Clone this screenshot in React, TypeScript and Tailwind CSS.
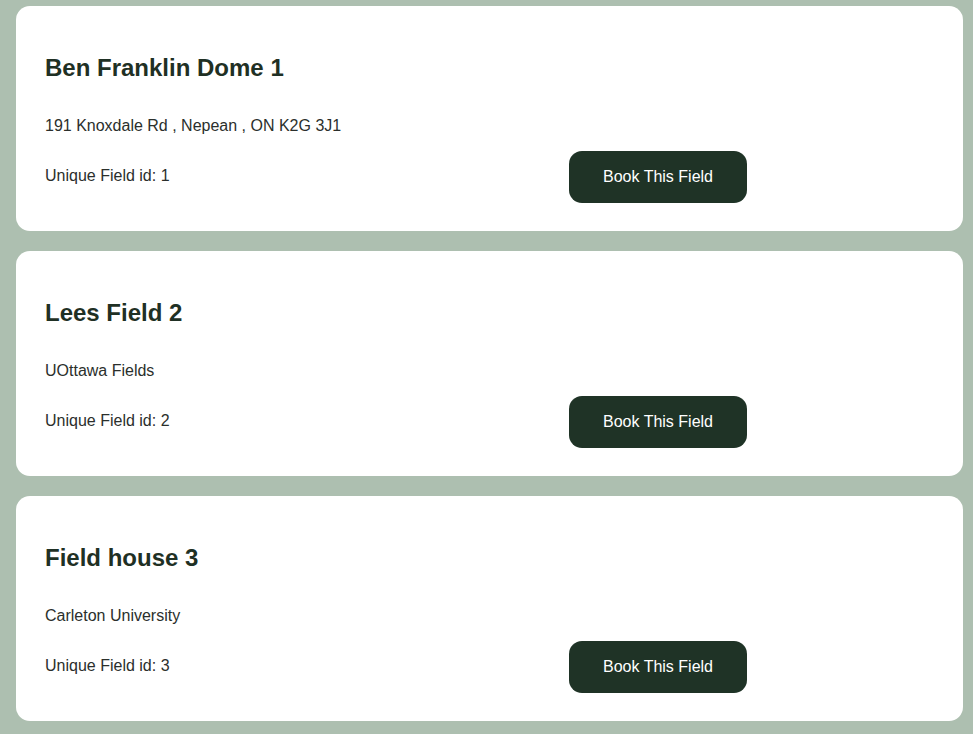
type Field = {
  id: number
  name: string
  location: string
}

const FIELDS: Field[] = [
  { id: 1, name: 'Ben Franklin Dome', location: '191 Knoxdale Rd , Nepean , ON K2G 3J1' },
  { id: 2, name: 'Lees Field', location: 'UOttawa Fields' },
  { id: 3, name: 'Field house', location: 'Carleton University' },
]

function FieldCard({ field }: { field: Field }) {
  return (
    <div className="bg-white rounded-[14px] h-[225px] px-[29px] pt-[48px]">
      <h2 className="text-[24px] leading-[28px] font-bold text-[#1f3024]">
        {field.name} {field.id}
      </h2>
      <p className="mt-[35px] text-[16px] leading-[18px] text-[#2b2f2c]">{field.location}</p>
      <div className="mt-[16px] grid grid-cols-[524px_178px] items-center">
        <span className="text-[16px] leading-[18px] text-[#2b2f2c] -mt-[2px]">
          Unique Field id: {field.id}
        </span>
        <button className="h-[52px] rounded-[13px] bg-[#1f3326] text-white text-[16px]">
          Book This Field
        </button>
      </div>
    </div>
  )
}

export default function App() {
  return (
    <div
      className="min-h-[734px] bg-[#adbfb0] pl-[16px] pr-[10px] pt-[6px] pb-[14px] flex flex-col gap-[20px]"
      style={{ fontFamily: '"Liberation Sans", Arial, sans-serif' }}
    >
      {FIELDS.map((f) => (
        <FieldCard key={f.id} field={f} />
      ))}
    </div>
  )
}
